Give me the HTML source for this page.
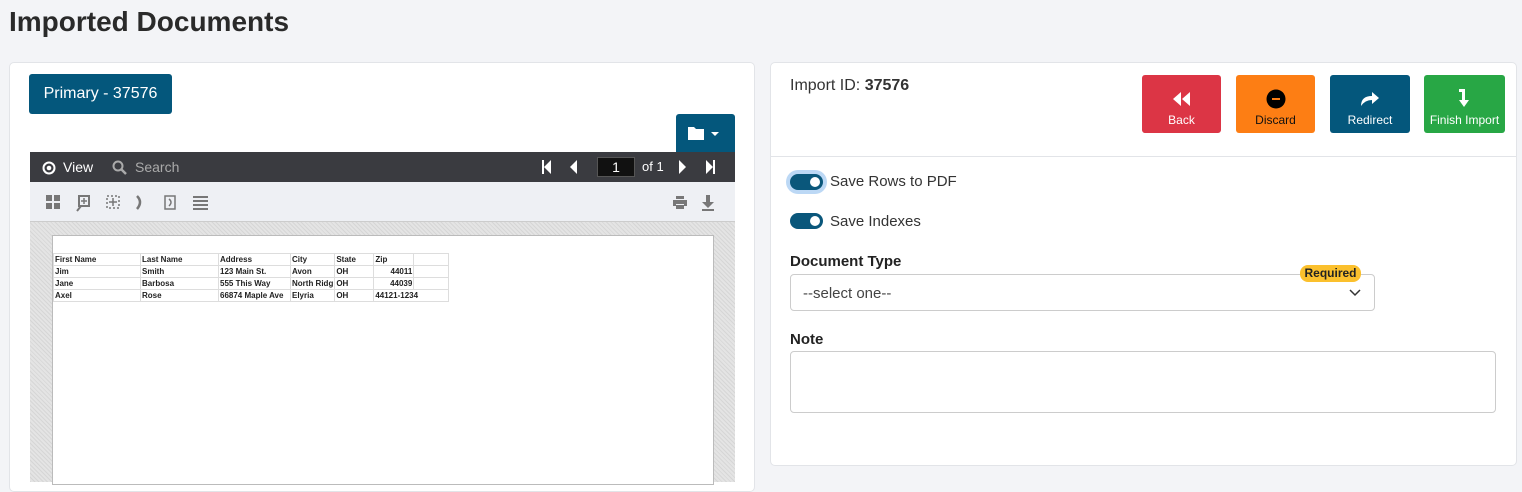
<!DOCTYPE html>
<html><head><meta charset="utf-8"><style>
*{box-sizing:border-box;margin:0;padding:0}
body{width:1522px;height:480px;overflow:hidden;background:#f3f4f7;font-family:"Liberation Sans",sans-serif;color:#222;position:relative}
.abs{position:absolute}
h1{position:absolute;left:9px;top:6px;font-size:28px;font-weight:bold;color:#2a2a2a}
.card{position:absolute;background:#fff;border:1px solid #e2e4e8;border-radius:5px}
.btn{position:absolute;color:#fff;border-radius:3px;font-size:12px;text-align:center}
.btn svg{position:absolute;left:50%;transform:translateX(-50%)}
.btn span{position:absolute;left:0;right:0;top:38px}
table{border-collapse:collapse;font-size:8px;font-family:"Liberation Sans Narrow","Liberation Sans",sans-serif;font-weight:bold}
td{border:1px solid #ddd;height:12px;padding:0 1px;white-space:nowrap;overflow:hidden}
.tog{position:absolute;width:33px;height:16px;border-radius:8px;background:#0a577b}
.tog::after{content:"";position:absolute;right:3px;top:3px;width:10px;height:10px;border-radius:50%;background:#fff}
.lbl{position:absolute;font-size:15px;color:#333}
.ic{position:absolute;fill:#777}
</style></head><body>
<h1>Imported Documents</h1>
<div class="card" style="left:9px;top:62px;width:746px;height:430px"></div>
<div class="abs" style="left:29px;top:74px;width:143px;height:40px;background:#04577c;border-radius:3px;color:#fff;font-size:16px;line-height:40px;text-align:center">Primary - 37576</div>
<div class="abs" style="left:676px;top:114px;width:59px;height:38px;background:#04577c;border-radius:3px 3px 0 0">
<svg width="40" height="20" style="position:absolute;left:11px;top:10px"><path d="M1 3h6l2 2h8v11H1z" fill="#fff"/><path d="M24 8h8l-4 4z" fill="#fff"/></svg></div>
<div class="abs" style="left:30px;top:152px;width:705px;height:30px;background:#3a3b40;color:#fff;font-size:14px">
<svg class="abs" style="left:12px;top:9px" width="16" height="14"><circle cx="7" cy="7" r="5.5" stroke="#fff" stroke-width="2" fill="none"/><circle cx="7" cy="7" r="2.3" fill="#fff"/></svg>
<span class="abs" style="left:33px;top:7px">View</span>
<svg class="abs" style="left:82px;top:8px" width="16" height="16"><circle cx="6" cy="6" r="4.5" stroke="#aaa" stroke-width="2" fill="none"/><path d="M9 9l5 5" stroke="#aaa" stroke-width="2.5"/></svg>
<span class="abs" style="left:105px;top:7px;color:#aaa">Search</span>
<svg class="abs" style="left:510px;top:7px" width="190" height="16"><path d="M2 1v14h2V1zM4 8l7-7v14z" fill="#fff"/><path d="M30 8l7-7v14z" fill="#fff"/><path d="M139 1l7 7-7 7z" fill="#fff"/><path d="M166 1l7 7-7 7zM173 1h2v14h-2z" fill="#fff"/></svg>
<div class="abs" style="left:567px;top:5px;width:38px;height:20px;background:#111;border:1px solid #555;text-align:center;line-height:18px;font-size:14px">1</div>
<span class="abs" style="left:612px;top:7px;font-size:13px">of 1</span>
</div>
<div class="abs" style="left:30px;top:182px;width:705px;height:40px;background:#eef0f4;border-bottom:1px solid #ccc">
<svg class="ic" style="left:15px;top:12px" width="180" height="18"><rect x="1" y="1" width="6" height="6"/><rect x="9" y="1" width="6" height="6"/><rect x="1" y="9" width="6" height="6"/><rect x="9" y="9" width="6" height="6"/>
<path d="M34 2h10v10h-10zM36 12l-4 5" stroke="#777" stroke-width="2" fill="none"/><path d="M39 4v6M36 7h6" stroke="#777" stroke-width="1.5"/>
<rect x="62" y="2" width="12" height="12" stroke="#777" stroke-width="1.5" stroke-dasharray="2 2" fill="none"/><path d="M68 4v8M64 8h8" stroke="#777" stroke-width="1.5"/>
<path d="M92 2q6 6 0 13" stroke="#777" stroke-width="2.5" fill="none"/>
<rect x="120" y="2" width="10" height="13" stroke="#777" stroke-width="1.5" fill="none"/><path d="M124 5q4 3 0 7" stroke="#777" stroke-width="1.5" fill="none"/>
<path d="M148 3h15M148 7h15M148 11h15M148 15h15" stroke="#777" stroke-width="2"/></svg>
<svg class="ic" style="left:642px;top:12px" width="50" height="18"><path d="M4 2h8v3H4zM1 6h14v6h-3v-2H4v2H1zM4 11h8v4H4z"/><path d="M34 1h4v7h4l-6 6-6-6h4zM30 15h12v2H30z"/></svg>
</div>
<div class="abs" style="left:30px;top:222px;width:705px;height:260px;background:repeating-linear-gradient(45deg,#d6d6d6 0 1px,#e4e4e4 1px 3px)"></div>
<div class="abs" style="left:52px;top:235px;width:662px;height:250px;background:#fff;border:1px solid #bbb">
<table class="abs" style="left:0;top:17px;width:396px">
<tr><td style="width:87px">First Name</td><td style="width:78px">Last Name</td><td style="width:72px">Address</td><td style="width:40px">City</td><td style="width:39px">State</td><td style="width:40px">Zip</td><td></td></tr>
<tr><td>Jim</td><td>Smith</td><td>123 Main St.</td><td>Avon</td><td>OH</td><td style="text-align:right">44011</td><td></td></tr>
<tr><td>Jane</td><td>Barbosa</td><td>555 This Way</td><td>North Ridg</td><td>OH</td><td style="text-align:right">44039</td><td></td></tr>
<tr><td>Axel</td><td>Rose</td><td>66874 Maple Ave</td><td>Elyria</td><td>OH</td><td colspan="2">44121-1234</td></tr>
</table></div>

<div class="card" style="left:770px;top:62px;width:747px;height:404px"></div>
<div class="abs" style="left:770px;top:156px;width:747px;height:1px;background:#e2e4e8"></div>
<div class="abs" style="left:790px;top:77px;font-size:16px;color:#333">Import ID: <b>37576</b></div>
<div class="btn" style="left:1142px;top:75px;width:79px;height:58px;background:#dc3545"><svg style="top:16px" width="22" height="16"><path d="M10 1L2 8l8 7zM19 1l-8 7 8 7z" fill="#fff"/></svg><span>Back</span></div>
<div class="btn" style="left:1236px;top:75px;width:79px;height:58px;background:#fd7e14;color:#111"><svg style="top:14px" width="20" height="20"><circle cx="10" cy="10" r="9.5" fill="#000"/><rect x="6" y="9" width="8" height="2" fill="#fd7e14"/></svg><span>Discard</span></div>
<div class="btn" style="left:1330px;top:75px;width:80px;height:58px;background:#04577c"><svg style="top:14px" width="22" height="18"><path d="M2 17q0-10 11-10V3l7 6-7 6v-4q-7 0-11 6z" fill="#fff"/></svg><span>Redirect</span></div>
<div class="btn" style="left:1424px;top:75px;width:81px;height:58px;background:#28a745"><svg style="top:13px" width="16" height="20"><path d="M2 1h6v11h4l-5 7-5-7h3V4H2z" fill="#fff"/></svg><span>Finish Import</span></div>

<div class="abs" style="left:786px;top:170px;width:41px;height:24px;border-radius:12px;background:#bcd8f5"></div>
<div class="tog" style="left:790px;top:174px"></div>
<div class="lbl" style="left:830px;top:173px">Save Rows to PDF</div>
<div class="tog" style="left:790px;top:213px"></div>
<div class="lbl" style="left:830px;top:213px">Save Indexes</div>
<div class="abs" style="left:790px;top:253px;font-size:15px;font-weight:bold">Document Type</div>
<div class="abs" style="left:790px;top:274px;width:585px;height:37px;border:1px solid #ccc;border-radius:4px;font-size:15px;color:#444">
<span style="position:absolute;left:12px;top:10px">--select one--</span>
<svg class="abs" style="left:558px;top:14px" width="12" height="8"><path d="M1 1l5 5 5-5" stroke="#333" stroke-width="1.5" fill="none"/></svg></div>
<div class="abs" style="left:1300px;top:265px;width:61px;height:17px;background:#fbc02d;border-radius:8px;font-size:12px;font-weight:bold;text-align:center;line-height:17px">Required</div>
<div class="abs" style="left:790px;top:331px;font-size:15px;font-weight:bold">Note</div>
<div class="abs" style="left:790px;top:351px;width:706px;height:62px;border:1px solid #ccc;border-radius:4px"></div>
</body></html>
